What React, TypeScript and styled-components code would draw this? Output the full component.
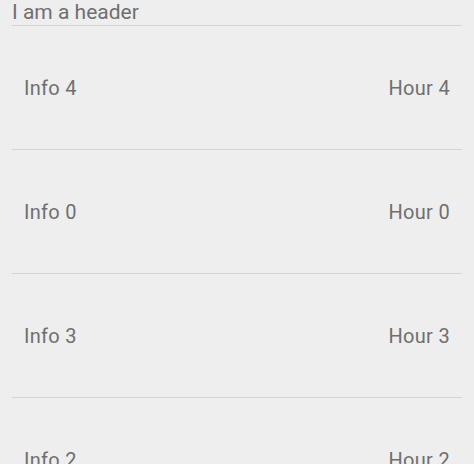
import * as React from "react";
import styled, { createGlobalStyle } from "styled-components";

const GlobalStyle = createGlobalStyle`
  html, body {
    margin: 0;
    padding: 0;
    background: #eeeeee;
    overflow: hidden;
  }
`;

const Page = styled.div`
  font-family: Roboto, "Liberation Sans", sans-serif;
  color: #6f6f6f;
  padding: 0 12px;
  height: 464px;
  overflow: hidden;
`;

const Header = styled.div`
  font-size: 21px;
  line-height: 24px;
  height: 25px;
  border-bottom: 1px solid #d4d4d4;
`;

const Row = styled.div`
  display: flex;
  justify-content: space-between;
  align-items: center;
  height: 123px;
  padding: 0 12px;
  font-size: 20px;
  letter-spacing: 0.3px;
  border-bottom: 1px solid #d4d4d4;
`;

const rows = [4, 0, 3, 2];

export default function App() {
  return (
    <>
      <GlobalStyle />
      <Page>
        <Header>I am a header</Header>
        {rows.map((n) => (
          <Row key={n}>
            <span>Info {n}</span>
            <span>Hour {n}</span>
          </Row>
        ))}
      </Page>
    </>
  );
}
